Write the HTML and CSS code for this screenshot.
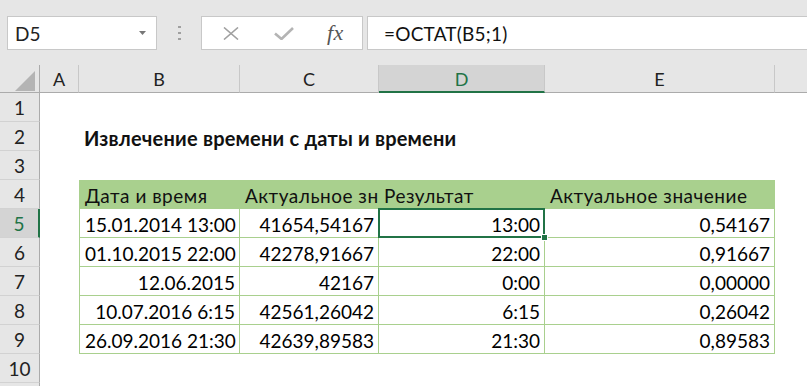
FILE: index.html
```html
<!DOCTYPE html>
<html lang="ru">
<head>
<meta charset="utf-8">
<title>Excel</title>
<link rel="stylesheet" href="styles.css">
</head>
<body>
<div class="app">
  <div class="fbar">
    <div class="namebox">
      <span class="nb-text">D5</span>
      <svg class="nb-arrow" viewBox="0 0 7 4"><path d="M0 0h7L3.5 4z"/></svg>
    </div>
    <div class="grip"><i></i><i></i><i></i></div>
    <div class="fxbox">
      <svg class="ico-x" viewBox="0 0 16 13"><path d="M1 0.5L15 12.5M15 0.5L1 12.5"/></svg>
      <svg class="ico-ok" viewBox="0 0 20 13"><path d="M1 6.5L7.5 12L19 1"/></svg>
      <span class="fx">fx</span>
    </div>
    <div class="formula">=ОСТАТ(B5;1)</div>
  </div>

  <div class="sheet">
    <div class="row head">
      <div class="rh corner"><svg class="tri" viewBox="0 0 20 20"><path d="M20 0V20H0z"/></svg></div>
      <div class="ch cA">A</div>
      <div class="ch cB">B</div>
      <div class="ch cC">C</div>
      <div class="ch cD sel">D</div>
      <div class="ch cE">E</div>
      <div class="ch cF"></div>
    </div>

    <div class="row">
      <div class="rh">1</div>
      <div class="c cA"></div><div class="c cB"></div><div class="c cC"></div><div class="c cD"></div><div class="c cE"></div><div class="c cF"></div>
    </div>
    <div class="row">
      <div class="rh">2</div>
      <div class="c cA"></div><div class="c cB title">Извлечение времени с даты и времени</div><div class="c cC"></div><div class="c cD"></div><div class="c cE"></div><div class="c cF"></div>
    </div>
    <div class="row">
      <div class="rh">3</div>
      <div class="c cA"></div><div class="c cB"></div><div class="c cC"></div><div class="c cD"></div><div class="c cE"></div><div class="c cF"></div>
    </div>
    <div class="row">
      <div class="rh">4</div>
      <div class="c cA"></div>
      <div class="c cB t th first">Дата и время</div>
      <div class="c cC t th">Актуальное значение</div>
      <div class="c cD t th">Результат</div>
      <div class="c cE t th">Актуальное значение</div>
      <div class="c cF"></div>
    </div>
    <div class="row">
      <div class="rh sel">5</div>
      <div class="c cA"></div>
      <div class="c cB t first r">15.01.2014 13:00</div>
      <div class="c cC t r">41654,54167</div>
      <div class="c cD t r active">13:00<span class="handle"></span></div>
      <div class="c cE t r">0,54167</div>
      <div class="c cF"></div>
    </div>
    <div class="row">
      <div class="rh">6</div>
      <div class="c cA"></div>
      <div class="c cB t first r">01.10.2015 22:00</div>
      <div class="c cC t r">42278,91667</div>
      <div class="c cD t r">22:00</div>
      <div class="c cE t r">0,91667</div>
      <div class="c cF"></div>
    </div>
    <div class="row">
      <div class="rh">7</div>
      <div class="c cA"></div>
      <div class="c cB t first r">12.06.2015</div>
      <div class="c cC t r">42167</div>
      <div class="c cD t r">0:00</div>
      <div class="c cE t r">0,00000</div>
      <div class="c cF"></div>
    </div>
    <div class="row">
      <div class="rh">8</div>
      <div class="c cA"></div>
      <div class="c cB t first r">10.07.2016 6:15</div>
      <div class="c cC t r">42561,26042</div>
      <div class="c cD t r">6:15</div>
      <div class="c cE t r">0,26042</div>
      <div class="c cF"></div>
    </div>
    <div class="row">
      <div class="rh">9</div>
      <div class="c cA"></div>
      <div class="c cB t first r">26.09.2016 21:30</div>
      <div class="c cC t r">42639,89583</div>
      <div class="c cD t r">21:30</div>
      <div class="c cE t r">0,89583</div>
      <div class="c cF"></div>
    </div>
    <div class="row">
      <div class="rh">10</div>
      <div class="c cA"></div><div class="c cB"></div><div class="c cC"></div><div class="c cD"></div><div class="c cE"></div><div class="c cF"></div>
    </div>
    <div class="row">
      <div class="rh"></div>
      <div class="c cA"></div><div class="c cB"></div><div class="c cC"></div><div class="c cD"></div><div class="c cE"></div><div class="c cF"></div>
    </div>
  </div>
</div>
</body>
</html>
```

FILE: styles.css
```css
* { box-sizing: border-box; }

body {
  margin: 0;
  background: #fff;
  font-family: Lato, "Open Sans", sans-serif;
}

.app {
  width: 807px;
  height: 386px;
  overflow: hidden;
  background: #fff;
}

/* ---------- formula bar ---------- */
.fbar {
  display: flex;
  align-items: flex-start;
  height: 65px;
  padding: 16px 0 0 7px;
  background: #e6e6e6;
}

.namebox {
  flex: none;
  width: 150px;
  height: 34px;
  display: flex;
  align-items: center;
  padding-left: 7px;
  background: #fff;
  border: 1px solid #c8c8c8;
  font-size: 19px;
  color: #222;
}

.nb-text { flex: 1; }

.nb-arrow {
  width: 7px;
  height: 4px;
  margin-right: 10px;
  fill: #777;
}

.grip {
  flex: none;
  width: 44px;
  height: 34px;
  display: flex;
  flex-direction: column;
  align-items: center;
  justify-content: center;
  gap: 4px;
}

.grip i {
  display: block;
  width: 3px;
  height: 2px;
  background: #a0a0a0;
}

.fxbox {
  flex: none;
  width: 162px;
  height: 34px;
  display: flex;
  align-items: center;
  padding-left: 21px;
  background: #fff;
  border: 1px solid #c8c8c8;
}

.ico-x {
  width: 16px;
  height: 13px;
  fill: none;
  stroke: #a0a0a0;
  stroke-width: 1.6;
}

.ico-ok {
  width: 20px;
  height: 13px;
  margin-left: 35px;
  fill: none;
  stroke: #b4b4b4;
  stroke-width: 2.6;
}

.fx {
  margin-left: 33px;
  font-family: "Liberation Serif", "DejaVu Serif", serif;
  font-style: italic;
  font-size: 22px;
  color: #555;
  letter-spacing: 0.5px;
}

.formula {
  flex: 1;
  height: 34px;
  margin-left: 4px;
  display: flex;
  align-items: center;
  padding-left: 16px;
  background: #fff;
  border: 1px solid #c8c8c8;
  border-right: none;
  font-size: 19px;
  letter-spacing: 0.2px;
  color: #111;
}

/* ---------- sheet ---------- */
.row {
  display: flex;
  height: 29px;
}

.row.head {
  height: 28px;
  background: #e6e6e6;
}

.cA { width: 39px; }
.cB { width: 161px; }
.cC { width: 139px; }
.cD { width: 166px; }
.cE { width: 230px; }
.cF { flex: 1 !important; }

.rh {
  flex: none;
  width: 40px;
  height: 100%;
  background: #e6e6e6;
  border-right: 1px solid #ababab;
  border-bottom: 1px solid #d2d2d2;
  text-align: center;
  font-size: 19px;
  line-height: 28px;
  padding-top: 1px;
  color: #222;
}

.rh.sel {
  background: #d4d4d4;
  border-right: 2px solid #217346;
  color: #217346;
}

.rh.corner {
  border-bottom: 1px solid #ababab;
}

.tri {
  display: block;
  width: 20px;
  height: 20px;
  margin: 5px 0 0 15px;
  fill: #b4b4b4;
}

.ch {
  flex: none;
  height: 100%;
  border-right: 1px solid #c8c8c8;
  border-bottom: 1px solid #ababab;
  text-align: center;
  font-size: 18px;
  line-height: 28px;
  color: #222;
}

.ch.sel {
  background: #d4d4d4;
  border-bottom: 2px solid #217346;
  color: #217346;
}

.ch.cF { border-right: none; }

.c {
  flex: none;
  height: 100%;
  padding: 2px 4px 0 5px;
  white-space: nowrap;
  overflow: hidden;
  font-size: 19px;
  line-height: 28px;
  color: #000;
}

.c.title {
  overflow: visible;
  font-weight: 700;
  font-size: 20px;
  letter-spacing: 0.2px;
  color: #111;
}

.t {
  border-right: 1px solid #a9d08e;
  border-bottom: 1px solid #a9d08e;
}

.t.first { border-left: 1px solid #a9d08e; }

.th {
  background: #a9d08e;
  border-top: 1px solid #a9d08e;
  padding-top: 1px;
  letter-spacing: 0.5px;
  color: #111;
}

.r { text-align: right; }

.active {
  position: relative;
  overflow: visible;
}

.active::before {
  content: "";
  position: absolute;
  inset: -1px;
  border: 2px solid #217346;
}

.handle {
  position: absolute;
  right: -4px;
  bottom: -4px;
  width: 7px;
  height: 7px;
  background: #217346;
  border: 1px solid #fff;
}
```
